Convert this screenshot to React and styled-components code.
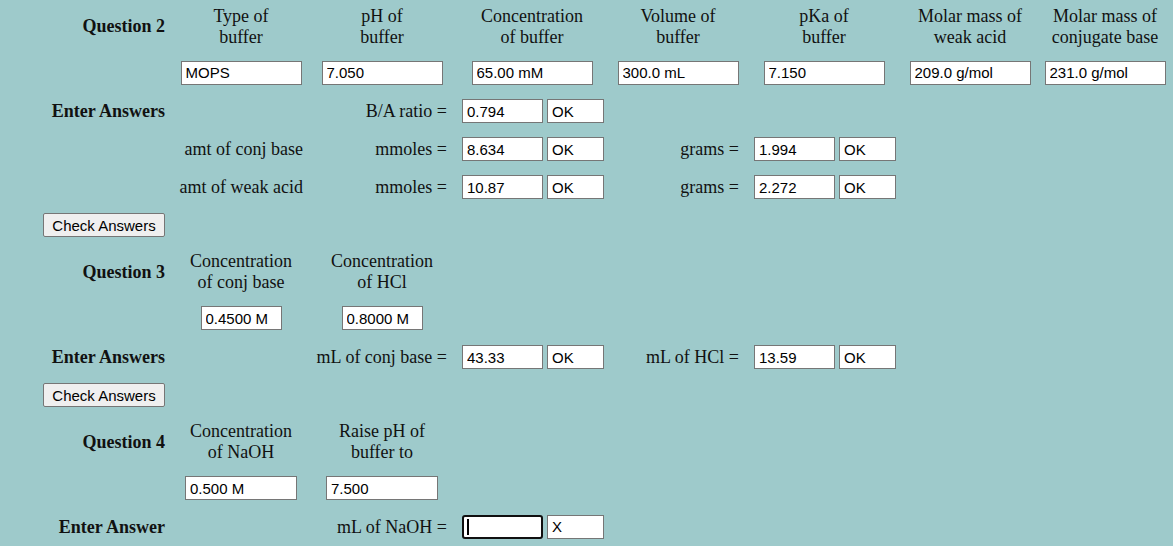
import styled, { createGlobalStyle } from "styled-components";

const GlobalStyle = createGlobalStyle`
	html, body {
		margin: 0;
		padding: 0;
		background: #9ecacb;
	}
	body {
		font-family: "Liberation Serif", "Times New Roman", serif;
		font-size: 18px;
		color: #111;
	}
`;

const Sheet = styled.div`
	display: flex;
	flex-direction: column;
	width: 1172px;
`;

// every row shares the same column grid so labels and fields line up
const Row = styled.div`
	display: grid;
	grid-template-columns: 172px 138px 144px 156px 136px 156px 136px 134px;
	height: ${(props) => props.$h}px;
	align-items: center;
`;

const Cell = styled.div`
	grid-column: ${(props) => props.$col} / span ${(props) => props.$span || 1};
	display: flex;
	align-items: center;
	justify-content: ${(props) =>
		props.$align === "right"
			? "flex-end"
			: props.$align === "left"
			? "flex-start"
			: "center"};
	gap: 4px;
	padding: ${(props) => props.$top || 0}px
		${(props) => (props.$align === "right" ? 7 : 8)}px 0 8px;
	line-height: 21px;
	text-align: ${(props) => props.$align || "center"};
	white-space: nowrap;
`;

const Label = styled(Cell)`
	font-weight: bold;
`;

const Field = styled.input`
	box-sizing: border-box;
	width: ${(props) => props.$w}px;
	height: 24px;
	margin: 0;
	padding: 0 4px;
	border: 1px solid #767676;
	border-radius: 0;
	background: #fff;
	color: #000;
	font-family: "Liberation Sans", Arial, sans-serif;
	font-size: 15px;
	outline: none;
`;

const FocusWrap = styled.span`
	position: relative;
	display: inline-flex;
`;

const FocusField = styled(Field)`
	border: 2px solid #101010;
	border-radius: 3px;
	box-shadow: inset 0 0 0 1px #fff;
`;

const Caret = styled.span`
	position: absolute;
	left: 5px;
	top: 4px;
	width: 2px;
	height: 16px;
	background: #000;
`;

const CheckButton = styled.button`
	box-sizing: border-box;
	width: 122px;
	height: 24px;
	margin: 0;
	padding: 0;
	border: 1px solid #767676;
	border-radius: 2px;
	background: #efefef;
	color: #000;
	font-family: "Liberation Sans", Arial, sans-serif;
	font-size: 15px;
`;

const q2Headers = [
	["Type of", "buffer", "MOPS"],
	["pH of", "buffer", "7.050"],
	["Concentration", "of buffer", "65.00 mM"],
	["Volume of", "buffer", "300.0 mL"],
	["pKa of", "buffer", "7.150"],
	["Molar mass of", "weak acid", "209.0 g/mol"],
	["Molar mass of", "conjugate base", "231.0 g/mol"],
];

function Answer({ col, value, status }) {
	return (
		<Cell $col={col} $align="left">
			<Field $w={81} defaultValue={value} readOnly />
			<Field $w={57} defaultValue={status} readOnly />
		</Cell>
	);
}

function Header({ title, cols, h = 54, top = 2 }) {
	return (
		<Row $h={h}>
			<Label $col={1} $align="right" $top={top}>
				{title}
			</Label>
			{cols.map((c, i) => (
				<Cell key={i} $col={i + 2} $top={top}>
					{c[0]}
					<br />
					{c[1]}
				</Cell>
			))}
		</Row>
	);
}

function Inputs({ cols, width, h = 40 }) {
	return (
		<Row $h={h}>
			{cols.map((c, i) => (
				<Cell key={i} $col={i + 2}>
					<Field $w={width} defaultValue={c[2]} readOnly />
				</Cell>
			))}
		</Row>
	);
}

function Check() {
	return (
		<Row $h={38}>
			<Cell $col={1} $align="right">
				<CheckButton type="button">Check Answers</CheckButton>
			</Cell>
		</Row>
	);
}

export default function App() {
	return (
		<>
			<GlobalStyle />
			<Sheet>
				<Header title="Question 2" cols={q2Headers} h={53} top={0} />
				<Inputs cols={q2Headers} width={121} h={39} />
				<Row $h={38}>
					<Label $col={1} $align="right">
						Enter Answers
					</Label>
					<Cell $col={3} $align="right">
						B/A ratio =
					</Cell>
					<Answer col={4} value="0.794" status="OK" />
				</Row>
				<Row $h={38}>
					<Cell $col={2} $align="right">
						amt of conj base
					</Cell>
					<Cell $col={3} $align="right">
						mmoles =
					</Cell>
					<Answer col={4} value="8.634" status="OK" />
					<Cell $col={5} $align="right">
						grams =
					</Cell>
					<Answer col={6} value="1.994" status="OK" />
				</Row>
				<Row $h={38}>
					<Cell $col={2} $align="right">
						amt of weak acid
					</Cell>
					<Cell $col={3} $align="right">
						mmoles =
					</Cell>
					<Answer col={4} value="10.87" status="OK" />
					<Cell $col={5} $align="right">
						grams =
					</Cell>
					<Answer col={6} value="2.272" status="OK" />
				</Row>
				<Check />

				<Header
					title="Question 3"
					cols={[
						["Concentration", "of conj base"],
						["Concentration", "of HCl"],
					]}
				/>
				<Inputs
					cols={[
						[null, null, "0.4500 M"],
						[null, null, "0.8000 M"],
					]}
					width={81}
				/>
				<Row $h={38}>
					<Label $col={1} $align="right">
						Enter Answers
					</Label>
					<Cell $col={2} $span={2} $align="right">
						mL of conj base =
					</Cell>
					<Answer col={4} value="43.33" status="OK" />
					<Cell $col={5} $align="right">
						mL of HCl =
					</Cell>
					<Answer col={6} value="13.59" status="OK" />
				</Row>
				<Check />

				<Header
					title="Question 4"
					cols={[
						["Concentration", "of NaOH"],
						["Raise pH of", "buffer to"],
					]}
				/>
				<Inputs
					cols={[
						[null, null, "0.500 M"],
						[null, null, "7.500"],
					]}
					width={112}
				/>
				<Row $h={37}>
					<Label $col={1} $align="right" $top={1}>
						Enter Answer
					</Label>
					<Cell $col={2} $span={2} $align="right" $top={1}>
						mL of NaOH =
					</Cell>
					<Cell $col={4} $align="left">
						<FocusWrap>
							<FocusField $w={81} defaultValue="" readOnly />
							<Caret />
						</FocusWrap>
						<Field $w={57} defaultValue="X" readOnly />
					</Cell>
				</Row>
			</Sheet>
		</>
	);
}
